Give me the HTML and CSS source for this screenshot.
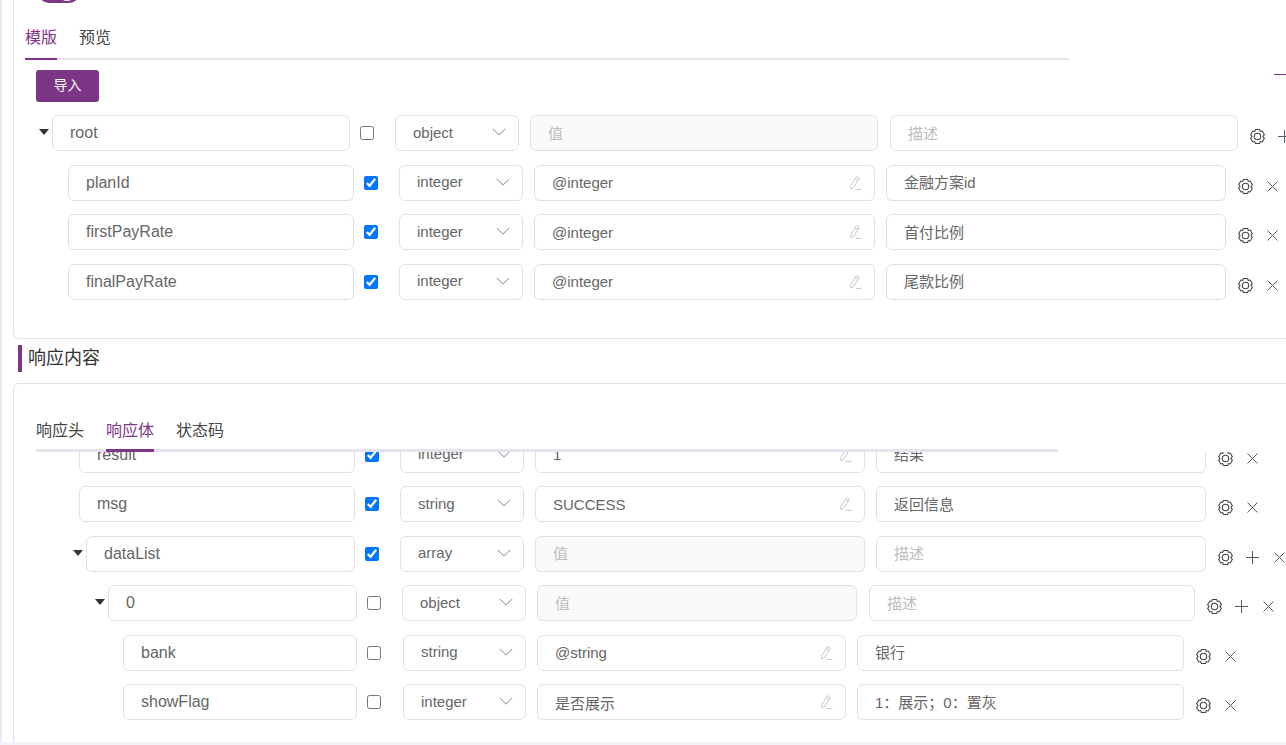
FILE: index.html
```html
<!DOCTYPE html>
<html lang="zh-CN">
<head>
<meta charset="UTF-8" />
<title>接口详情</title>
<link rel="stylesheet" href="styles.css">
</head>
<body>

<svg class="sprite" aria-hidden="true">
  <symbol id="gear" viewBox="1 1 14 14">
    <path d="M6 1.5h4l.6 1.8 1.8-.4 2 3.4-1.3 1.7 1.3 1.7-2 3.4-1.8-.4-.6 1.8H6l-.6-1.8-1.8.4-2-3.4L2.9 8 1.6 6.3l2-3.4 1.8.4z" />
    <circle cx="8" cy="8" r="3" />
  </symbol>
  <symbol id="plus" viewBox="0 0 15 15"><path d="M7.5 1v13M1 7.5h13" /></symbol>
  <symbol id="close" viewBox="0 0 15 15"><path d="M2.5 2.5l10 10M12.5 2.5l-10 10" /></symbol>
  <symbol id="pencil" viewBox="0 0 16 16">
    <path d="M9.6 1.6l2.8 1.7-5.6 9-2.9 1.4-.1-3.2zM8.3 3.7l2.8 1.7" />
    <path d="M8.5 14.4h6" />
  </symbol>
  <symbol id="chevron" viewBox="0 0 14 8"><path d="M.7.8L7 7l6.3-6.2" /></symbol>
</svg>

<div class="page">
  <div class="card card-top">
    <div class="toggle"></div>
    <div class="tabs tabs-template">
      <div class="tab active">模版</div>
      <div class="tab">预览</div>
    </div>
    <button class="import-btn">导入</button>
    <div class="rows">

      <div class="row lv-root">
        <i class="caret"></i>
        <div class="field name">root</div>
        <input type="checkbox" class="check" />
        <div class="field select">object<svg class="chevron"><use href="#chevron" /></svg></div>
        <div class="field value disabled placeholder">值</div>
        <div class="field desc placeholder">描述</div>
        <div class="actions">
          <svg class="icon gear"><use href="#gear" /></svg>
          <svg class="icon"><use href="#plus" /></svg>
        </div>
      </div>

      <div class="row lv-req">
        <div class="field name">planId</div>
        <input type="checkbox" class="check" checked />
        <div class="field select">integer<svg class="chevron"><use href="#chevron" /></svg></div>
        <div class="field value">@integer<svg class="pencil"><use href="#pencil" /></svg></div>
        <div class="field desc">金融方案id</div>
        <div class="actions">
          <svg class="icon gear"><use href="#gear" /></svg>
          <svg class="icon"><use href="#close" /></svg>
        </div>
      </div>

      <div class="row lv-req">
        <div class="field name">firstPayRate</div>
        <input type="checkbox" class="check" checked />
        <div class="field select">integer<svg class="chevron"><use href="#chevron" /></svg></div>
        <div class="field value">@integer<svg class="pencil"><use href="#pencil" /></svg></div>
        <div class="field desc">首付比例</div>
        <div class="actions">
          <svg class="icon gear"><use href="#gear" /></svg>
          <svg class="icon"><use href="#close" /></svg>
        </div>
      </div>

      <div class="row lv-req">
        <div class="field name">finalPayRate</div>
        <input type="checkbox" class="check" checked />
        <div class="field select">integer<svg class="chevron"><use href="#chevron" /></svg></div>
        <div class="field value">@integer<svg class="pencil"><use href="#pencil" /></svg></div>
        <div class="field desc">尾款比例</div>
        <div class="actions">
          <svg class="icon gear"><use href="#gear" /></svg>
          <svg class="icon"><use href="#close" /></svg>
        </div>
      </div>

    </div>
  </div>

  <h3 class="section-title">响应内容</h3>

  <div class="card card-response">
    <div class="tabs tabs-response">
      <div class="tab">响应头</div>
      <div class="tab active">响应体</div>
      <div class="tab">状态码</div>
    </div>
    <div class="scroll">
      <div class="rows">

        <div class="row lv-leaf">
          <div class="field name">result</div>
          <input type="checkbox" class="check" checked />
          <div class="field select">integer<svg class="chevron"><use href="#chevron" /></svg></div>
          <div class="field value">1<svg class="pencil"><use href="#pencil" /></svg></div>
          <div class="field desc">结果</div>
          <div class="actions">
            <svg class="icon gear"><use href="#gear" /></svg>
            <svg class="icon"><use href="#close" /></svg>
          </div>
        </div>

        <div class="row lv-leaf">
          <div class="field name">msg</div>
          <input type="checkbox" class="check" checked />
          <div class="field select">string<svg class="chevron"><use href="#chevron" /></svg></div>
          <div class="field value">SUCCESS<svg class="pencil"><use href="#pencil" /></svg></div>
          <div class="field desc">返回信息</div>
          <div class="actions">
            <svg class="icon gear"><use href="#gear" /></svg>
            <svg class="icon"><use href="#close" /></svg>
          </div>
        </div>

        <div class="row lv-list">
          <i class="caret"></i>
          <div class="field name">dataList</div>
          <input type="checkbox" class="check" checked />
          <div class="field select">array<svg class="chevron"><use href="#chevron" /></svg></div>
          <div class="field value disabled placeholder">值</div>
          <div class="field desc placeholder">描述</div>
          <div class="actions">
            <svg class="icon gear"><use href="#gear" /></svg>
            <svg class="icon"><use href="#plus" /></svg>
            <svg class="icon"><use href="#close" /></svg>
          </div>
        </div>

        <div class="row lv-item">
          <i class="caret"></i>
          <div class="field name">0</div>
          <input type="checkbox" class="check" />
          <div class="field select">object<svg class="chevron"><use href="#chevron" /></svg></div>
          <div class="field value disabled placeholder">值</div>
          <div class="field desc placeholder">描述</div>
          <div class="actions">
            <svg class="icon gear"><use href="#gear" /></svg>
            <svg class="icon"><use href="#plus" /></svg>
            <svg class="icon"><use href="#close" /></svg>
          </div>
        </div>

        <div class="row lv-sub">
          <div class="field name">bank</div>
          <input type="checkbox" class="check" />
          <div class="field select">string<svg class="chevron"><use href="#chevron" /></svg></div>
          <div class="field value">@string<svg class="pencil"><use href="#pencil" /></svg></div>
          <div class="field desc">银行</div>
          <div class="actions">
            <svg class="icon gear"><use href="#gear" /></svg>
            <svg class="icon"><use href="#close" /></svg>
          </div>
        </div>

        <div class="row lv-sub">
          <div class="field name">showFlag</div>
          <input type="checkbox" class="check" />
          <div class="field select">integer<svg class="chevron"><use href="#chevron" /></svg></div>
          <div class="field value">是否展示<svg class="pencil"><use href="#pencil" /></svg></div>
          <div class="field desc">1：展示；0：置灰</div>
          <div class="actions">
            <svg class="icon gear"><use href="#gear" /></svg>
            <svg class="icon"><use href="#close" /></svg>
          </div>
        </div>

      </div>
    </div>
  </div>

  <div class="edge-line"></div>
</div>

</body>
</html>
```
FILE: styles.css
```css
html, body {
  margin: 0;
  height: 745px;
  overflow: hidden;
  background: #f2f3f8;
}
body {
  font-family: "Liberation Sans", "Noto Sans CJK SC", sans-serif;
  color: #666;
}
.sprite {
  display: none;
}
.page {
  position: relative;
  height: 742px;
  overflow: hidden;
  background: #fff;
  border-left: 2px solid #e9e9f3;
}
/* scrollbar thumb left of the page */
.page::before {
  content: "";
  position: absolute;
  left: -2px;
  top: 226px;
  width: 2px;
  height: 45px;
  background: #dcdde6;
}
.edge-line {
  position: absolute;
  top: 74px;
  left: 1272px;
  width: 14px;
  height: 1px;
  background: #7d3587;
}
.card {
  width: 1320px;
  margin-left: 11px;
  border: 1px solid #e2e2ea;
  border-radius: 6px;
  background: #fff;
}
.card-top {
  margin-top: -40px;
  padding: 20px 0 38.5px;
}
.card-response {
  padding-bottom: 100px;
}
.toggle {
  position: relative;
  width: 42px;
  height: 22px;
  margin-left: 24px;
  border-radius: 11px;
  background: #7d3587;
}
.toggle::after {
  content: "";
  position: absolute;
  right: 4px;
  bottom: 2px;
  width: 18px;
  height: 18px;
  border-radius: 50%;
  background: #fff;
}

/* tabs */
.tabs {
  display: flex;
  gap: 22px;
}
.tab {
  font-size: 16px;
  line-height: 24px;
  color: #444;
}
.tab.active {
  color: #7d3587;
}
.tabs-template {
  width: 1044px;
  margin: 23px 0 0 11px;
  border-bottom: 2px solid #e4e4ed;
}
.tabs-template .tab {
  padding-bottom: 8px;
}
.tabs-template .tab.active {
  margin-bottom: -2px;
  border-bottom: 2px solid #7d3587;
}
.tabs-response {
  position: relative;
  width: 1022px;
  margin: 35px 0 0 22px;
  border-bottom: 3px solid #e4e4ed;
}
.tabs-response .tab {
  padding-bottom: 6px;
}
.tabs-response .tab.active {
  margin-bottom: -3px;
  border-bottom: 3px solid #7d3587;
}

.import-btn {
  display: block;
  width: 63px;
  height: 32px;
  margin: 10px 0 0 22px;
  padding: 0 0 4px;
  border: none;
  border-radius: 3px;
  background: #7d3587;
  color: #fff;
  font-family: inherit;
  font-size: 14px;
}
.card-top .rows {
  margin-top: 13px;
}

.section-title {
  height: 27px;
  margin: 6px 0 11px 16px;
  padding-left: 6px;
  border-left: 4px solid #7d3587;
  font-size: 18px;
  font-weight: 400;
  line-height: 27px;
  color: #333;
}

.scroll {
  overflow: hidden;
}
.scroll .rows {
  margin-top: -15.5px;
}

/* schema rows */
.rows {
  display: flex;
  flex-direction: column;
  gap: 13.5px;
}
.row {
  --name: 286px;
  --select: 124px;
  --value: 341px;
  --desc: 340px;
  --gap-check: 21px;
  --gap-value: 11px;
  --gap-desc: 11px;
  display: flex;
  align-items: flex-start;
}
.lv-root {
  --name: 298px;
  --value: 348px;
  --desc: 348px;
  --gap-desc: 12px;
  margin-left: 25px;
}
.lv-req {
  margin-left: 54px;
}
.lv-leaf {
  --name: 276px;
  --value: 330px;
  --desc: 330px;
  margin-left: 65px;
}
.lv-list {
  --name: 269px;
  --value: 330px;
  --desc: 330px;
  margin-left: 59px;
}
.lv-item {
  --name: 249px;
  --value: 320px;
  --desc: 326px;
  --gap-desc: 12px;
  margin-left: 81px;
}
.lv-sub {
  --name: 234px;
  --select: 123px;
  --value: 309px;
  --desc: 327px;
  --gap-check: 22px;
  margin-left: 109px;
}
.caret {
  flex-shrink: 0;
  width: 0;
  height: 0;
  margin: 14px 3px 0 0;
  border-top: 6px solid #333;
  border-left: 5px solid transparent;
  border-right: 5px solid transparent;
}
.field {
  display: flex;
  align-items: center;
  justify-content: space-between;
  flex-shrink: 0;
  box-sizing: border-box;
  height: 36px;
  padding: 0 12px 0 17px;
  border: 1px solid #e0e0ea;
  border-radius: 6px;
  background: #fff;
  font-size: 15px;
  white-space: nowrap;
}
.field.name {
  width: var(--name);
  font-size: 16px;
}
.field.select {
  width: var(--select);
  margin-left: var(--gap-check);
  padding-bottom: 2px;
}
.field.value {
  width: var(--value);
  margin-left: var(--gap-value);
}
.field.desc {
  width: var(--desc);
  margin-left: var(--gap-desc);
  padding-bottom: 2px;
}
.field.disabled {
  background: #fafafa;
}
.field.placeholder {
  padding-bottom: 2px;
  color: #bcbcc2;
}
.check {
  flex-shrink: 0;
  width: 14px;
  height: 14px;
  margin: 11px 0 0 10px;
  accent-color: #0075ff;
}
.chevron {
  width: 14px;
  height: 8px;
  fill: none;
  stroke: #a8abb2;
  stroke-width: 1.1;
}
.pencil {
  width: 16px;
  height: 16px;
  margin-right: -1px;
  fill: none;
  stroke: #c4c7cf;
  stroke-width: 1;
}
.actions {
  display: flex;
  align-items: center;
  gap: 12px;
  margin: 14px 0 0 12px;
}
.icon {
  width: 15px;
  height: 15px;
  fill: none;
  stroke: #555a66;
  stroke-width: 1;
}
.icon.gear {
  stroke: #444;
}
```
